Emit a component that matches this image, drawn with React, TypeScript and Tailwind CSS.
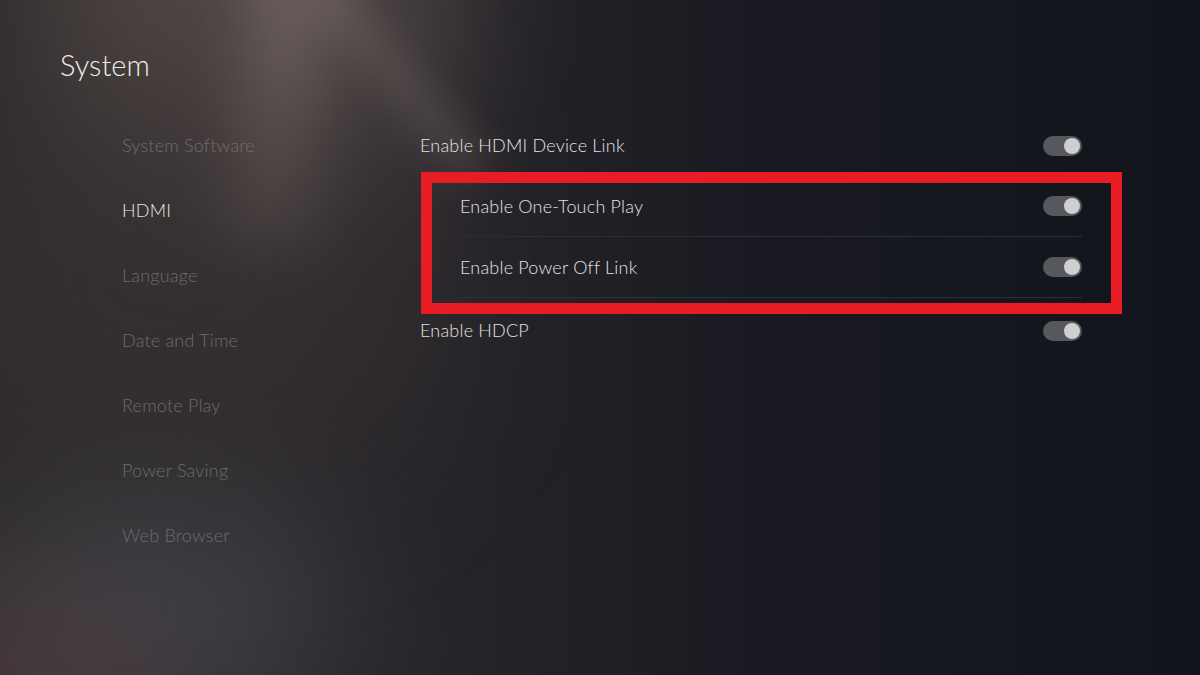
import type { ReactNode } from 'react';

const navItems = [
  'System Software',
  'HDMI',
  'Language',
  'Date and Time',
  'Remote Play',
  'Power Saving',
  'Web Browser',
];

// Pill switch, always "on" in this screen
const Toggle = () => (
  <div className="w-[39px] h-[20px] rounded-full bg-[#56585e] flex items-center justify-end pr-[2px]">
    <div className="w-[16px] h-[16px] rounded-full bg-[#cfcfcf]" />
  </div>
);

const SettingRow = ({ label, sub = false, divider = false }: { label: string; sub?: boolean; divider?: boolean }) => (
  <div className={`h-[61px] flex items-center justify-between ${sub ? 'ml-[40px]' : ''} ${divider ? 'border-b border-[#2c2e35]' : ''}`}>
    <span className="text-[18px] font-light text-[#e2e2e2] tracking-[0.2px]">{label}</span>
    <Toggle />
  </div>
);

// Soft light layers behind the menu
const Backdrop = () => (
  <div className="absolute inset-0 pointer-events-none">
    <div className="absolute inset-0 bg-[linear-gradient(90deg,#2c292a_0%,#27252a_35%,#1a1b22_62%,#12141b_100%)]" />
    <div className="absolute left-[40px] top-[-200px] w-[420px] h-[400px] rounded-full bg-[#8a7770] opacity-40 blur-[70px]" />
    <div className="absolute left-[240px] top-[-60px] w-[80px] h-[300px] rotate-[6deg] bg-[#a08f88] opacity-40 blur-[30px]" />
    <div className="absolute left-[380px] top-[-40px] w-[36px] h-[240px] rotate-[-40deg] bg-[#8e7e78] opacity-30 blur-[18px]" />
    <div className="absolute left-[-80px] top-[60px] w-[520px] h-[420px] rounded-full bg-[#3b3434] opacity-60 blur-[80px]" />
    <div className="absolute left-[-20px] top-[500px] w-[360px] h-[220px] rounded-full bg-[#4a4f54] opacity-60 blur-[70px]" />
    <div className="absolute left-[-120px] top-[600px] w-[300px] h-[160px] rounded-full bg-[#5a3e46] opacity-50 blur-[60px]" />
  </div>
);

const Annotation = ({ children }: { children: ReactNode }) => (
  <div className="relative">
    {children}
    <div className="absolute left-[1px] right-[-40px] top-[-4px] bottom-[-16px] border-[11px] border-[#e81c24]" />
  </div>
);

export default function App() {
  return (
    <div
      className="relative w-[1200px] h-[675px] overflow-hidden bg-[#1d1c21]"
      style={{ fontFamily: 'Lato, "Open Sans", sans-serif' }}
    >
      <Backdrop />

      <div className="relative">
        <h1 className="pl-[60px] pt-[48px] h-[113px] text-[29px] font-light text-[#ececec] leading-[34px]">System</h1>

        <div className="flex">
          <nav className="w-[420px] pl-[122px] flex flex-col">
            {navItems.map((item) => (
              <div
                key={item}
                className={`h-[65px] flex items-center text-[18px] font-light tracking-[0.2px] ${item === 'HDMI' ? 'text-[#e6e6e6]' : 'text-[#6e6b6d]'}`}
              >
                {item}
              </div>
            ))}
          </nav>

          <section className="w-[662px] pt-[2px] flex flex-col">
            <SettingRow label="Enable HDMI Device Link" />
            <Annotation>
              <SettingRow label="Enable One-Touch Play" sub divider />
              <SettingRow label="Enable Power Off Link" sub divider />
            </Annotation>
            <div className="mt-[2px]">
              <SettingRow label="Enable HDCP" />
            </div>
          </section>
        </div>
      </div>
    </div>
  );
}
